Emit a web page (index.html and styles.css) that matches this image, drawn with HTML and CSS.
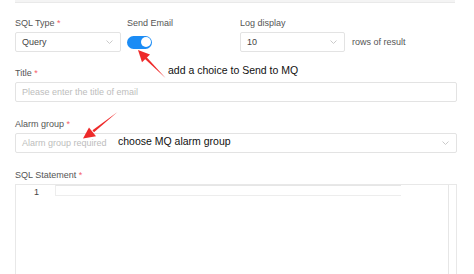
FILE: index.html
```html
<!DOCTYPE html>
<html>
<head>
<meta charset="utf-8">
<link rel="stylesheet" href="styles.css">
</head>
<body>
<div class="form">
  <div class="prev"></div>
  <div class="row1">
    <div class="item">
      <div class="label">SQL Type <span class="req">*</span></div>
      <div class="select">
        <span class="value">Query</span>
        <svg class="chev" width="7" height="4" viewBox="0 0 7 4"><path d="M0.5 0.5 L3.5 3.5 L6.5 0.5" fill="none" stroke="#c4c4c4" stroke-width="0.9"/></svg>
      </div>
    </div>
    <div class="item">
      <div class="label">Send Email</div>
      <div class="switch-wrap"><span class="switch"><span class="knob"></span></span></div>
    </div>
    <div class="item">
      <div class="label">Log display</div>
      <div class="inline">
        <div class="select log">
          <span class="value">10</span>
          <svg class="chev" width="7" height="4" viewBox="0 0 7 4"><path d="M0.5 0.5 L3.5 3.5 L6.5 0.5" fill="none" stroke="#c4c4c4" stroke-width="0.9"/></svg>
        </div>
        <span class="suffix">rows of result</span>
      </div>
    </div>
  </div>
  <div class="item block first">
    <div class="label">Title <span class="req">*</span></div>
    <div class="input"><span class="ph">Please enter the title of email</span></div>
  </div>
  <div class="item block">
    <div class="label">Alarm group <span class="req">*</span></div>
    <div class="select wide">
      <span class="ph">Alarm group required</span>
      <svg class="chev" width="7" height="4" viewBox="0 0 7 4"><path d="M0.5 0.5 L3.5 3.5 L6.5 0.5" fill="none" stroke="#c4c4c4" stroke-width="0.9"/></svg>
    </div>
  </div>
  <div class="item block">
    <div class="label">SQL Statement <span class="req">*</span></div>
    <div class="editor">
      <div class="gutter"><span class="ln">1</span></div>
      <div class="code"><div class="active-line"></div></div>
      <div class="vscroll"></div>
    </div>
  </div>
</div>
<div class="note note1">add a choice to Send to MQ</div>
<div class="note note2">choose MQ alarm group</div>
<svg class="arrows" width="474" height="274" viewBox="0 0 474 274">
  <polygon points="165.5,78 146.5,57 144.7,58.8" fill="#ee2a2a"/>
  <polygon points="138,50 150,54.4 142,62.2" fill="#ee2a2a"/>
  <polygon points="117.5,112 92.5,130.3 94,132.3" fill="#ee2a2a"/>
  <polygon points="83,138.5 89,127.5 96,136.3" fill="#ee2a2a"/>
</svg>
</body>
</html>
```

FILE: styles.css
```css
* { box-sizing: border-box; }
html, body { margin: 0; padding: 0; background: #fff; }
body {
  width: 474px;
  height: 274px;
  overflow: hidden;
  font-family: "Liberation Sans", Arial, sans-serif;
  font-size: 9px;
  color: #555;
  position: relative;
}
.form {
  padding: 0 17px 0 15px;
}
.prev {
  width: 440px;
  height: 3px;
  background: #f4f4f4;
  border-bottom: 1px solid #e9e9e9;
}
.row1 {
  display: grid;
  grid-template-columns: 106px 107px auto;
  column-gap: 6px;
  margin-top: 14px;
}
.label {
  line-height: 12px;
  height: 12px;
  margin-bottom: 3px;
  color: #555;
  white-space: nowrap;
}
.req { color: #f5616a; }
.select, .input {
  height: 20px;
  border: 1px solid #e3e3e3;
  border-radius: 2px;
  display: flex;
  align-items: center;
  justify-content: space-between;
  padding: 0 7px 0 6px;
  background: #fff;
}
.value { color: #444; }
.ph { color: #bdbdbd; }
.chev { display: block; }
.switch-wrap {
  height: 20px;
  display: flex;
  align-items: center;
}
.switch {
  width: 25px;
  height: 13px;
  border-radius: 7px;
  background: #1b8cf5;
  position: relative;
  display: block;
}
.knob {
  position: absolute;
  right: 1.5px;
  top: 1.5px;
  width: 10px;
  height: 10px;
  border-radius: 50%;
  background: #fff;
}
.inline {
  display: flex;
  align-items: center;
  gap: 7px;
}
.select.log { width: 105px; }
.suffix { color: #555; }
.item.block { margin-top: 16px; }
.item.block.first { margin-top: 15px; }
.editor {
  height: 90px;
  border: 1px solid #e8e8e8;
  border-bottom: none;
  display: flex;
}
.gutter {
  width: 39px;
  padding-top: 2px;
  text-align: right;
  padding-right: 16px;
}
.ln {
  line-height: 10px;
  color: #444;
  font-size: 9px;
}
.code {
  width: 346px;
}
.active-line {
  height: 11px;
  border-top: 1px solid #e6e6e6;
  border-bottom: 1px solid #ededed;
  border-left: 1px solid #ededed;
}
.vscroll {
  margin-left: auto;
  width: 8px;
  border-left: 1px solid #e6e6e6;
}
.note {
  position: absolute;
  font-size: 10.5px;
  line-height: 12px;
  color: #111;
  white-space: nowrap;
}
.note1 { left: 168px; top: 64px; }
.note2 { left: 118px; top: 134.5px; }
.arrows {
  position: absolute;
  left: 0;
  top: 0;
  pointer-events: none;
}
```
